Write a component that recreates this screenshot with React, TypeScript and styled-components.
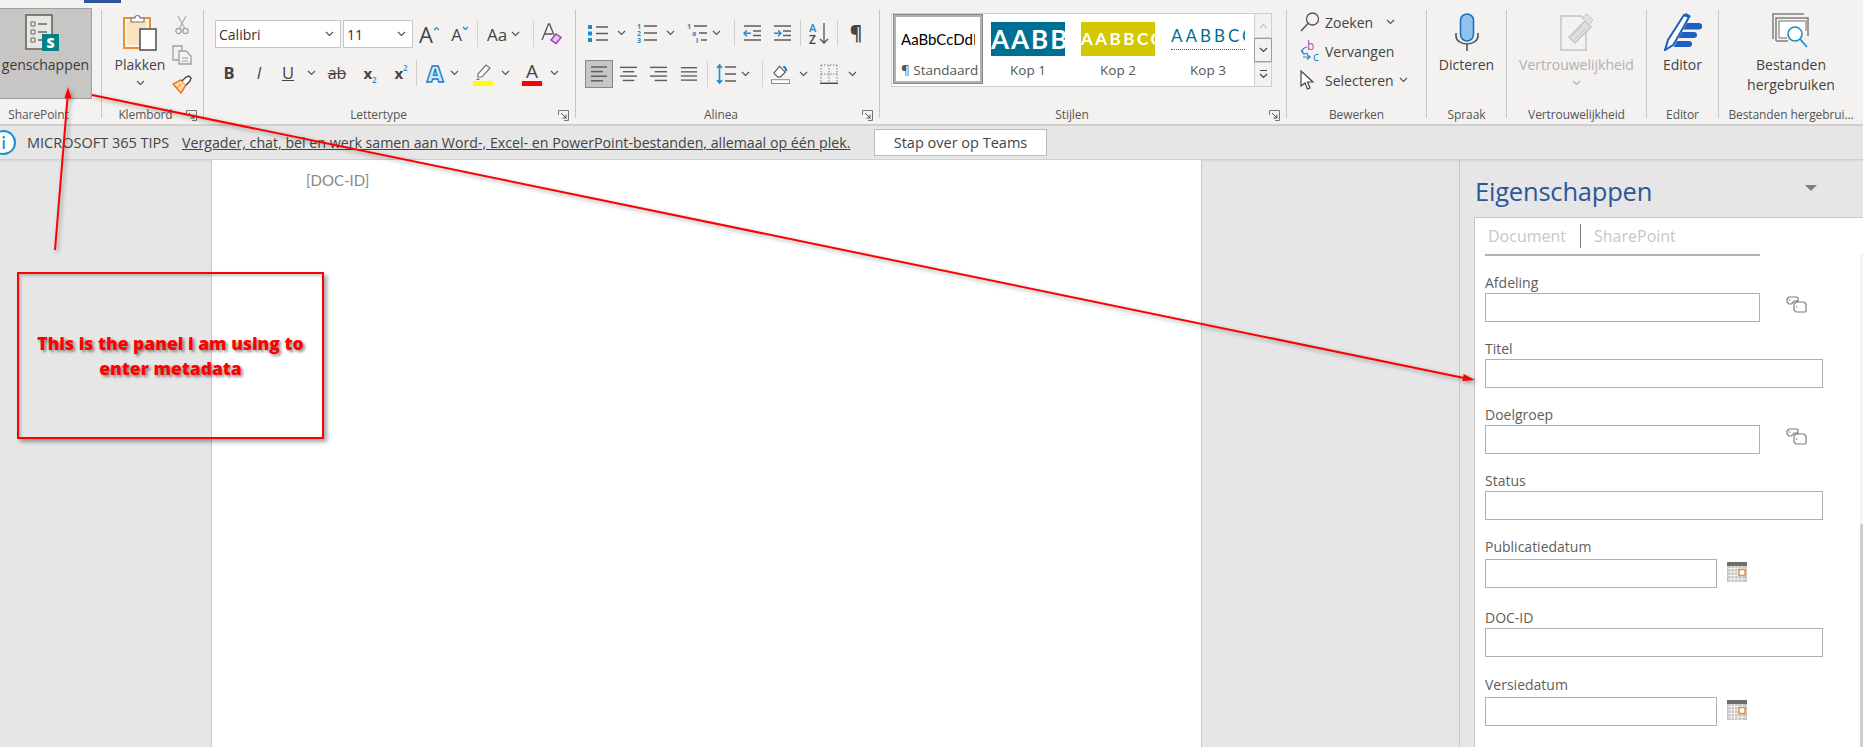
import { FC, ReactNode } from "react";
import styled, { createGlobalStyle } from "styled-components";

const GlobalStyle = createGlobalStyle`
  html, body {
    margin: 0;
    padding: 0;
    background: #e6e6e6;
  }
  * {
    box-sizing: border-box;
  }
`;

const UI_FONT = `"Open Sans", "Noto Sans", sans-serif`;
const DOC_FONT = `Lato, "Liberation Sans", sans-serif`;
const INK = "#605e5c";
const BLUE = "#1e8bcd";

const Screen = styled.div`
  position: relative;
  width: 1863px;
  height: 747px;
  overflow: hidden;
  background: #e6e6e6;
  font-family: ${UI_FONT};
  color: #444;
`;

/* ribbon */
const Ribbon = styled.div`
  height: 126px;
  background: #f3f2f1;
  border-bottom: 2px solid #d2d0ce;
`;
const TabStrip = styled.div`
  height: 3px;
  margin-bottom: 7px;
  & > div {
    margin-left: 84px;
    width: 37px;
    height: 3px;
    background: #2b579a;
  }
`;
const Groups = styled.div`
  display: flex;
`;
const Group = styled.section<{ $w: number; $pl?: number; $last?: boolean }>`
  width: ${(p) => p.$w}px;
  height: 108px;
  padding-left: ${(p) => p.$pl ?? 0}px;
  display: flex;
  flex-direction: column;
  flex-shrink: 0;
  border-right: ${(p) => (p.$last ? "none" : "1px solid #c8c6c4")};
`;
const GroupBody = styled.div`
  flex: 1;
  display: flex;
  flex-direction: column;
  min-height: 0;
`;
const BodyRow = styled.div`
  flex: 1;
  display: flex;
  min-height: 0;
`;
const Footer = styled.div<{ $pr?: number }>`
  height: 11px;
  display: flex;
  padding-right: ${(p) => p.$pr ?? 0}px;
  font-size: 12px;
  line-height: 16px;
  letter-spacing: -0.1px;
  color: #555;
  white-space: nowrap;
`;
const FooterLabel = styled.div`
  flex: 1;
  text-align: center;
  overflow: visible;
`;
const Launcher = styled.div`
  width: 22px;
  height: 16px;
  display: flex;
  align-items: center;
  justify-content: flex-end;
  padding-right: 6px;
`;

const ActiveButton = styled.div`
  width: 92px;
  height: 91px;
  margin-top: -2px;
  background: #c8c6c4;
  border: 1px solid #a19f9d;
  border-left: none;
  display: flex;
  flex-direction: column;
  align-items: center;
  padding-top: 5px;
  font-size: 14px;
  line-height: 20px;
  color: #3b3a39;
  overflow: hidden;
`;
const ActiveIcon = styled.div`
  height: 41px;
  margin-left: -5px;
`;
const BigButton = styled.div<{ $w?: number; $disabled?: boolean }>`
  width: ${(p) => (p.$w ? `${p.$w}px` : "100%")};
  padding-top: 3px;
  display: flex;
  flex-direction: column;
  align-items: center;
  font-size: 14px;
  line-height: 20px;
  text-align: center;
  white-space: nowrap;
  color: ${(p) => (p.$disabled ? "#b3b0ad" : "#444")};
`;
const BigIcon = styled.div`
  height: 42px;
  display: flex;
  align-items: flex-start;
  justify-content: center;
`;
const ChevronSlot = styled.div`
  height: 14px;
  display: flex;
  align-items: center;
  margin-top: 1px;
`;
const SmallColumn = styled.div`
  width: 24px;
  padding-top: 5px;
  display: flex;
  flex-direction: column;
  align-items: center;
  gap: 10px;
`;

const ToolRow = styled.div<{ $h: number; $mt: number; $pl?: number }>`
  height: ${(p) => p.$h}px;
  margin-top: ${(p) => p.$mt}px;
  padding-left: ${(p) => p.$pl ?? 0}px;
  display: flex;
  align-items: center;
`;
const Tool = styled.span<{ $w: number; $ml?: number; $active?: boolean; $h?: number }>`
  width: ${(p) => p.$w}px;
  height: ${(p) => (p.$h ? `${p.$h}px` : "auto")};
  margin-left: ${(p) => p.$ml ?? 0}px;
  flex-shrink: 0;
  display: inline-flex;
  align-items: center;
  justify-content: center;
  background: ${(p) => (p.$active ? "#c8c6c4" : "transparent")};
  border: ${(p) => (p.$active ? "1px solid #8a8886" : "none")};
`;
const ToolSep = styled.span<{ $ml: number }>`
  width: 1px;
  height: 26px;
  flex-shrink: 0;
  margin-left: ${(p) => p.$ml}px;
  background: #d2d0ce;
`;
const Combo = styled.div<{ $w: number; $ml?: number }>`
  width: ${(p) => p.$w}px;
  height: 28px;
  margin-left: ${(p) => p.$ml ?? 0}px;
  flex-shrink: 0;
  background: #fff;
  border: 1px solid #c8c6c4;
  display: flex;
  align-items: center;
  justify-content: space-between;
  padding: 0 6px 0 3px;
  font-size: 14px;
  color: #333;
`;
const Letter = styled.span<{
  $size: number;
  $weight?: number;
  $italic?: boolean;
  $under?: boolean;
  $strike?: boolean;
}>`
  font-size: ${(p) => p.$size}px;
  font-weight: ${(p) => p.$weight ?? 400};
  font-style: ${(p) => (p.$italic ? "italic" : "normal")};
  text-decoration: ${(p) => (p.$under ? "underline" : p.$strike ? "line-through" : "none")};
  line-height: 1;
  color: #444;
`;
const Caret = styled.svg`
  margin-bottom: 12px;
  flex-shrink: 0;
`;
const ScriptMark = styled.sub<{ $up?: boolean }>`
  font-size: 8px;
  font-weight: 600;
  color: ${BLUE};
  vertical-align: ${(p) => (p.$up ? "8px" : "-4px")};
  line-height: 0;
`;
const OutlineA = styled.span`
  font-size: 23px;
  font-weight: 800;
  line-height: 1;
  color: #d7ebfa;
  -webkit-text-stroke: 1.4px #1e7ccf;
`;
const ColorPick = styled.span<{ $bar: string }>`
  width: 20px;
  height: 26px;
  display: flex;
  flex-direction: column;
  align-items: center;
  justify-content: flex-end;
  font-size: 19px;
  line-height: 20px;
  &::after {
    content: "";
    width: 20px;
    height: 5px;
    background: ${(p) => p.$bar};
  }
`;

/* style gallery */
const Gallery = styled.div`
  margin: 3px 0 0 11px;
  width: 381px;
  height: 74px;
  background: #fff;
  border: 1px solid #d2d0ce;
  display: flex;
  padding-left: 1px;
`;
const StyleCard = styled.div<{ $active?: boolean }>`
  width: 90px;
  height: 70px;
  padding: ${(p) => (p.$active ? "5px 5px 0" : "8px 8px 0")};
  border: ${(p) => (p.$active ? "3px solid #b3b0ad" : "none")};
  outline: ${(p) => (p.$active ? "1px solid #8a8886" : "none")};
  outline-offset: -1px;
  text-align: center;
  font-size: 13.5px;
  line-height: 16px;
  color: #555;
  white-space: nowrap;
`;
const StylePreview = styled.div<{ $bg?: string; $color: string; $size: number; $weight?: number; $ls?: number; $dotted?: boolean }>`
  height: ${(p) => (p.$dotted ? 28 : 34)}px;
  overflow: hidden;
  background: ${(p) => p.$bg ?? "transparent"};
  color: ${(p) => p.$color};
  border-bottom: ${(p) => (p.$dotted ? "1px dotted #006f94" : "none")};
  font-family: ${DOC_FONT};
  font-size: ${(p) => p.$size}px;
  font-weight: ${(p) => p.$weight ?? 400};
  letter-spacing: ${(p) => p.$ls ?? 0}px;
  line-height: ${(p) => (p.$dotted ? 28 : 34)}px;
  text-align: left;
  white-space: nowrap;
`;
const StyleName = styled.div<{ $mt?: number }>`
  margin-top: ${(p) => p.$mt ?? 6}px;
`;
const GalleryScroll = styled.div`
  width: 18px;
  margin-left: auto;
  display: flex;
  flex-direction: column;
  margin-right: -1px;
  margin-top: -1px;
  margin-bottom: -1px;
`;
const ScrollButton = styled.div<{ $h: number; $strong?: boolean }>`
  height: ${(p) => p.$h}px;
  background: #f3f2f1;
  border: 1px solid ${(p) => (p.$strong ? "#a19f9d" : "#d2d0ce")};
  display: flex;
  align-items: center;
  justify-content: center;
`;

const FindRow = styled.div`
  height: 26px;
  margin-bottom: 3px;
  display: flex;
  align-items: center;
  font-size: 14px;
  &:first-child {
    margin-top: -1px;
  }
`;
const FindIcon = styled.span`
  width: 25px;
  display: inline-flex;
  justify-content: flex-start;
`;
const FindChevron = styled.span<{ $ml: number }>`
  margin-left: ${(p) => p.$ml}px;
  display: inline-flex;
`;

/* tips bar */
const TipsBar = styled.div`
  height: 34px;
  background: #e6e6e6;
  border-bottom: 1px solid #d2d0ce;
  box-shadow: 0 1px 2px rgba(0, 0, 0, 0.08);
  display: flex;
  align-items: center;
  font-size: 14.2px;
  color: #444;
`;
const InfoCircle = styled.span`
  width: 25px;
  height: 25px;
  margin-left: -9px;
  flex-shrink: 0;
  border: 2px solid #1e8bcd;
  border-radius: 50%;
  background: #fff;
  color: #1e8bcd;
  display: flex;
  align-items: center;
  justify-content: center;
  font-size: 17px;
  font-weight: 600;
  font-family: ${DOC_FONT};
`;
const TipsTitle = styled.span`
  margin-left: 11px;
  font-size: 14.5px;
  white-space: nowrap;
  width: 155px;
  flex-shrink: 0;
`;
const TipsLink = styled.span`
  text-decoration: underline;
  white-space: nowrap;
  width: 692px;
  flex-shrink: 0;
`;
const TipsButton = styled.div`
  width: 173px;
  height: 27px;
  background: #fff;
  border: 1px solid #bdbbb9;
  display: flex;
  align-items: center;
  justify-content: center;
  font-size: 14.5px;
`;

/* document area */
const Workspace = styled.div`
  display: flex;
  height: 587px;
`;
const Gutter = styled.div<{ $w: number }>`
  width: ${(p) => p.$w}px;
  flex-shrink: 0;
`;
const DocPage = styled.div`
  width: 991px;
  flex-shrink: 0;
  background: #fff;
  border-left: 1px solid #c8c6c4;
  border-right: 1px solid #c8c6c4;
  padding: 11px 0 0 94px;
  font-family: ${DOC_FONT};
  font-size: 15px;
  line-height: 19px;
  color: #8a8886;
`;
const Pane = styled.aside`
  flex: 1;
  min-width: 0;
  border-left: 1px solid #c8c6c4;
  padding-left: 14px;
  display: flex;
  flex-direction: column;
`;
const PaneHeader = styled.div`
  height: 57px;
  padding: 13px 46px 0 1px;
  display: flex;
  justify-content: space-between;
  font-size: 25.5px;
  line-height: 36px;
  letter-spacing: -0.2px;
  color: #2b579a;
  &::after {
    content: "";
    margin-top: 12px;
    width: 0;
    height: 0;
    border-left: 6px solid transparent;
    border-right: 6px solid transparent;
    border-top: 6px solid #7f7f7f;
  }
`;
const PaneCard = styled.div`
  flex: 1;
  min-height: 0;
  background: #fff;
  border-top: 1px solid #c8c6c4;
  border-left: 1px solid #c8c6c4;
  display: flex;
  flex-direction: column;
`;
const PaneTabs = styled.div`
  height: 36px;
  padding: 6px 0 0 13px;
  display: flex;
  align-items: flex-start;
  font-size: 16px;
  line-height: 24px;
  color: #c8c6c4;
  & > span:first-child {
    width: 93px;
    border-right: 1px solid #7f7f7f;
    margin-right: 13px;
  }
`;
const PaneBody = styled.div`
  flex: 1;
  min-height: 0;
  display: flex;
`;
const FormColumn = styled.div`
  flex: 1;
  padding-left: 10px;
`;
const CutField = styled.div`
  width: 275px;
  height: 2px;
  background: #b3b0ad;
`;
const Field = styled.div<{ $mt: number }>`
  margin-top: ${(p) => p.$mt}px;
`;
const FieldLabel = styled.div<{ $h: number }>`
  height: ${(p) => p.$h}px;
  font-size: 14px;
  line-height: 18px;
  color: #605e5c;
`;
const FieldLine = styled.div`
  display: flex;
  align-items: flex-start;
`;
const Input = styled.div<{ $w: number }>`
  width: ${(p) => p.$w}px;
  height: 29px;
  flex-shrink: 0;
  background: #fff;
  border: 1px solid #b3b0ad;
`;
const FieldIcon = styled.span<{ $ml: number }>`
  margin: 3px 0 0 ${(p) => p.$ml}px;
  display: inline-flex;
`;
const ScrollTrack = styled.div`
  width: 3px;
  background: #f3f3f3;
  display: flex;
  flex-direction: column;
`;
const ScrollThumb = styled.div`
  margin-top: 270px;
  flex: 1;
  background: #cdcdcd;
`;

/* annotation laid on top of the screenshot */
const ArrowLayer = styled.svg`
  position: absolute;
  left: 0;
  top: 0;
  pointer-events: none;
  filter: drop-shadow(2px 2px 2px rgba(0, 0, 0, 0.35));
`;
const CalloutBox = styled.div`
  position: absolute;
  left: 17px;
  top: 272px;
  width: 307px;
  height: 167px;
  border: 2px solid #ff0000;
  box-shadow: 3px 3px 4px rgba(0, 0, 0, 0.35), inset 2px 2px 3px rgba(0, 0, 0, 0.2);
  display: flex;
  align-items: center;
  justify-content: center;
  text-align: center;
  font-size: 17.5px;
  font-weight: 800;
  line-height: 25px;
  color: #ff0000;
  text-shadow: 2px 2px 3px rgba(0, 0, 0, 0.45);
`;

/* icons */
const Chevron: FC<{ color?: string }> = ({ color = "#555" }) => (
  <svg width="9" height="6" viewBox="0 0 9 6">
    <path d="M1 1l3.5 3.5L8 1" fill="none" stroke={color} strokeWidth="1.2" />
  </svg>
);
const LauncherIcon = () => (
  <svg width="11" height="11" viewBox="0 0 11 11">
    <path d="M.5 5V.5h10v10H6" fill="none" stroke="#777" />
    <path d="M3 3l5 5M8 4.5V8H4.5" fill="none" stroke="#555" />
  </svg>
);
const PropertiesIcon = () => (
  <svg width="36" height="38" viewBox="0 0 36 38">
    <rect x="1" y="1" width="26" height="34" fill="#e8e7e6" stroke="#69665f" strokeWidth="1.6" />
    <path d="M6 8h4v4H6zM6 16h4v4H6zM6 24h4v4H6z" fill="none" stroke="#69665f" />
    <path d="M13 10h9M13 18h9M13 26h4" stroke="#69665f" strokeWidth="1.4" />
    <rect x="17" y="20" width="17" height="17" fill="#038387" />
    <text x="25.5" y="33.5" textAnchor="middle" fontSize="14" fontWeight="800" fill="#fff" fontFamily="Open Sans">S</text>
  </svg>
);
const PasteIcon = () => (
  <svg width="34" height="38" viewBox="0 0 34 38">
    <rect x="1" y="5" width="26" height="30" fill="#fdf3e1" stroke="#e8913a" strokeWidth="2" />
    <rect x="4" y="8" width="20" height="24" fill="#fbe3bd" />
    <path d="M8 9V5h4a2.5 2.5 0 015 0h4v4z" fill="#fff" stroke="#777" strokeWidth="1.2" />
    <rect x="17" y="16" width="16" height="21" fill="#fff" stroke="#555" strokeWidth="1.6" />
  </svg>
);
const ScissorsIcon = () => (
  <svg width="14" height="20" viewBox="0 0 14 20">
    <path d="M3 1l6.5 12M11 1L4.5 13" stroke="#b3b0ad" strokeWidth="1.3" fill="none" />
    <circle cx="3.5" cy="16" r="2.6" fill="none" stroke="#a19f9d" strokeWidth="1.3" />
    <circle cx="10.5" cy="16" r="2.6" fill="none" stroke="#a19f9d" strokeWidth="1.3" />
  </svg>
);
const CopyIcon = () => (
  <svg width="20" height="20" viewBox="0 0 20 20">
    <path d="M1 1h9v14H1z" fill="#f3f2f1" stroke="#a19f9d" strokeWidth="1.3" />
    <path d="M7 6h7l5 5v8H7z" fill="#f3f2f1" stroke="#a19f9d" strokeWidth="1.3" />
    <path d="M10 13h6M10 16h6" stroke="#a19f9d" />
  </svg>
);
const PainterIcon = () => (
  <svg width="20" height="19" viewBox="0 0 20 19">
    <path d="M1 9l8 9 5-8-5-5z" fill="#fcdcae" stroke="#e8791a" strokeWidth="1.5" />
    <path d="M10 6l4-4 3-1 2 2-1 3-4 4" fill="#fff" stroke="#444" strokeWidth="1.4" />
    <path d="M5 13l4-4" stroke="#e8791a" />
  </svg>
);
const GrowA: FC<{ size: number; down?: boolean }> = ({ size, down }) => (
  <>
    <Letter $size={size}>A</Letter>
    <Caret width="7" height="5" viewBox="0 0 7 5">
      <path d={down ? "M1 1l2.5 2.5L6 1" : "M1 4l2.5-2.5L6 4"} fill="none" stroke={BLUE} strokeWidth="1.2" />
    </Caret>
  </>
);
const ClearFormatIcon = () => (
  <svg width="21" height="22" viewBox="0 0 21 22">
    <path d="M1 17L7.5 1h1L13 12M3.5 11h8" fill="none" stroke="#555" strokeWidth="1.3" />
    <path d="M10 17l5-6 5 3.5-5 6z" fill="#e9c6ee" stroke="#a03fb5" strokeWidth="1.4" />
  </svg>
);
const HighlightIcon = () => (
  <svg width="20" height="17" viewBox="0 0 20 17">
    <path d="M5 10l8-9 4 3-8 9H5z" fill="#fff" stroke="#777" strokeWidth="1.2" />
    <path d="M5 14l-2 2h4z" fill="#777" />
  </svg>
);
const Lines: FC<{ rows: [number, number][]; color?: string }> = ({ rows, color = "#605e5c" }) => (
  <svg width="20" height="20" viewBox="0 0 20 20">
    {rows.map(([x1, x2], i) => (
      <path key={i} d={`M${x1} ${3 + i * 4.6}H${x2}`} stroke={color} strokeWidth="1.5" />
    ))}
  </svg>
);
const BulletsIcon = () => (
  <svg width="21" height="18" viewBox="0 0 21 18">
    <path d="M0 1h4v4H0zM0 7.5h4v4H0zM0 14h4v4H0z" fill={BLUE} />
    <path d="M8 3h12M8 9.5h12M8 16h12" stroke={INK} strokeWidth="1.5" />
  </svg>
);
const NumberedIcon = () => (
  <svg width="20" height="20" viewBox="0 0 20 20">
    <text x="0" y="6" fontSize="7" fontWeight="700" fill={BLUE} fontFamily="Open Sans">1</text>
    <text x="0" y="13" fontSize="7" fontWeight="700" fill={BLUE} fontFamily="Open Sans">2</text>
    <text x="0" y="20" fontSize="7" fontWeight="700" fill={BLUE} fontFamily="Open Sans">3</text>
    <path d="M7 3h13M7 10h13M7 17h13" stroke={INK} strokeWidth="1.5" />
  </svg>
);
const MultilevelIcon = () => (
  <svg width="20" height="20" viewBox="0 0 20 20">
    <text x="0" y="6" fontSize="7" fontWeight="700" fill={BLUE} fontFamily="Open Sans">1</text>
    <text x="5" y="13" fontSize="7" fontWeight="700" fill={BLUE} fontFamily="Open Sans">a</text>
    <text x="9" y="20" fontSize="7" fontWeight="700" fill={BLUE} fontFamily="Open Sans">i</text>
    <path d="M7 3h13M12 10h8M14 17h6" stroke={INK} strokeWidth="1.5" />
  </svg>
);
const IndentIcon: FC<{ out?: boolean }> = ({ out }) => (
  <svg width="19" height="18" viewBox="0 0 19 18">
    <path d="M1 2h17M10 7h8M10 11.500h8M1 16h17" stroke={INK} strokeWidth="1.4" />
    <path d={out ? "M8 9.300H1M4 6.300L1 9.300l3 3" : "M1 9.300h7M5 6.300l3 3-3 3"} fill="none" stroke={BLUE} strokeWidth="1.4" />
  </svg>
);
const SortIcon = () => (
  <svg width="21" height="23" viewBox="0 0 21 23">
    <text x="0" y="10" fontSize="11" fontWeight="600" fill={BLUE} fontFamily="Open Sans">A</text>
    <text x="0" y="22" fontSize="12" fontWeight="600" fill="#444" fontFamily="Open Sans">Z</text>
    <path d="M15 1v20M11 17l4 4 4-4" fill="none" stroke="#555" strokeWidth="1.3" />
  </svg>
);
const LineSpacingIcon = () => (
  <svg width="20" height="20" viewBox="0 0 20 20">
    <path d="M3.500 1v18M1 4l2.500-3L6 4M1 16l2.500 3L6 16" fill="none" stroke={BLUE} strokeWidth="1.6" />
    <path d="M9 3h11M9 10h11M9 17h11" stroke={INK} strokeWidth="1.5" />
  </svg>
);
const ShadingIcon = () => (
  <svg width="20" height="21" viewBox="0 0 20 21">
    <path d="M3 9l6-7 6 6-5 5H7z" fill="#fff" stroke="#555" strokeWidth="1.2" />
    <path d="M13 2c2 1 3 3 3 5" fill="none" stroke="#1e6fc8" strokeWidth="2" />
    <rect x=".5" y="16" width="19" height="4" fill="#fff" stroke="#8a8886" />
  </svg>
);
const BordersIcon = () => (
  <svg width="18" height="20" viewBox="0 0 18 20">
    <path d="M1 1h16M1 1v18M17 1v18M9 1v18M1 10h16" fill="none" stroke="#7f7f7f" strokeDasharray="1.500 1.500" />
    <path d="M0 19.300h18" stroke="#444" strokeWidth="1.4" />
  </svg>
);
const SearchIcon = () => (
  <svg width="20" height="20" viewBox="0 0 20 20">
    <circle cx="12.500" cy="7" r="6" fill="none" stroke="#555" strokeWidth="1.3" />
    <path d="M8 11.500L1 19" stroke="#555" strokeWidth="1.5" />
  </svg>
);
const ReplaceIcon = () => (
  <svg width="20" height="22" viewBox="0 0 20 22">
    <text x="7" y="10" fontSize="12" fill="#b146c2" fontFamily="Open Sans">b</text>
    <text x="13" y="21" fontSize="12" fill={BLUE} fontFamily="Open Sans">c</text>
    <path d="M7 7C2 8 1 12 4 14M1 10.500L4 14l4-1M3 17h7M7 14.500l3 2.500-3 2.500" fill="none" stroke={BLUE} strokeWidth="1.2" />
  </svg>
);
const CursorIcon = () => (
  <svg width="15" height="20" viewBox="0 0 15 20">
    <path d="M1 1v15l4-3 2.500 6 2.500-1-2.500-6H13z" fill="#fff" stroke="#444" strokeWidth="1.2" />
  </svg>
);
const MicIcon = () => (
  <svg width="24" height="38" viewBox="0 0 24 38">
    <rect x="5.500" y="1" width="13" height="27" rx="6.500" fill="#8fc3ee" stroke="#1e6fc8" strokeWidth="1.6" />
    <path d="M1 20v3a11 8 0 0022 0v-3M12 31v7" fill="none" stroke="#555" strokeWidth="1.6" />
  </svg>
);
const SensitivityIcon = () => (
  <svg width="34" height="38" viewBox="0 0 34 38">
    <path d="M1 3h20l5 5v29H1z" fill="#f3f2f1" stroke="#d2d0ce" strokeWidth="2" />
    <path d="M9 24l16-16 6 6-16 16z" fill="#e1dfdd" stroke="#c8c6c4" strokeWidth="1.5" />
    <path d="M22 5l5-4 6 6-4 5z" fill="#e1dfdd" stroke="#c8c6c4" />
    <path d="M12 23l10-10M15 26l10-10" stroke="#c8c6c4" />
  </svg>
);
const EditorIcon = () => (
  <svg width="38" height="38" viewBox="0 0 38 38">
    <path d="M1 37l3-10L20 2l5 2-6 11-8 14-2 3z" fill="#fff" stroke="#1e5fc0" strokeWidth="2" />
    <path d="M20 2l2-2 5 3-2 2z" fill="#1e5fc0" />
    <path d="M23 10h12a3 3 0 010 6.500H19.500zM18 19h12a3 3 0 010 6H14.500zM13 28h12a3 3 0 010 6H9.500z" fill="#1e5fc0" />
  </svg>
);
const ReuseIcon = () => (
  <svg width="38" height="35" viewBox="0 0 38 35">
    <path d="M1 26V1h31" fill="none" stroke="#7f7f7f" strokeWidth="1.5" />
    <path d="M4 28V5h32v18M4 28h12" fill="none" stroke="#7f7f7f" strokeWidth="1.5" />
    <path d="M7 25V8h27v10M7 25h8" fill="#fff" stroke="#a19f9d" strokeWidth="1.500" />
    <circle cx="23" cy="21" r="7" fill="#fff" stroke="#1e8bcd" strokeWidth="1.600" />
    <path d="M28 26l7 8" stroke="#1e8bcd" strokeWidth="1.800" />
  </svg>
);
const TagsIcon = () => (
  <svg width="21" height="18" viewBox="0 0 21 18">
    <path d="M1 3l2-2h8l1 1v3H8L5.500 8H3L1 6zM8 8l2-2h8l2 2v7a1 1 0 01-1 1h-9l-2-2z" fill="#fff" stroke="#7f7f7f" strokeWidth="1.200" />
    <circle cx="3.500" cy="4" r=".8" fill="#7f7f7f" />
    <circle cx="10.500" cy="11" r=".8" fill="#7f7f7f" />
  </svg>
);
const CalendarIcon = () => (
  <svg width="20" height="20" viewBox="0 0 20 20">
    <rect width="20" height="20" fill="#c8c6c4" />
    <rect width="20" height="4" fill="#6e6e6e" />
    <path d="M1 6.500h18M1 10h18M1 13.500h18M1 17h18M4 4v16M7.500 4v16M11 4v16M15 4v16" stroke="#f2f2f2" />
    <rect x="12" y="7.500" width="6" height="6" fill="#fff" stroke="#e8913a" strokeWidth="1.500" />
  </svg>
);

const FormField: FC<{ label: string; mt: number; w: number; labelH?: number; icon?: ReactNode; iconMl?: number }> = ({
  label,
  mt,
  w,
  labelH = 19,
  icon,
  iconMl = 0,
}) => (
  <Field $mt={mt}>
    <FieldLabel $h={labelH}>{label}</FieldLabel>
    <FieldLine>
      <Input $w={w} />
      {icon && <FieldIcon $ml={iconMl}>{icon}</FieldIcon>}
    </FieldLine>
  </Field>
);

const GroupFooter: FC<{ label: string; launcher?: boolean; pr?: number }> = ({ label, launcher, pr }) => (
  <Footer $pr={pr}>
    <FooterLabel>{label}</FooterLabel>
    {launcher && (
      <Launcher>
        <LauncherIcon />
      </Launcher>
    )}
  </Footer>
);

export default function App() {
  return (
    <Screen>
      <GlobalStyle />
      <Ribbon>
        <TabStrip>
          <div />
        </TabStrip>
        <Groups>
          <Group $w={102}>
            <GroupBody>
              <ActiveButton>
                <ActiveIcon>
                  <PropertiesIcon />
                </ActiveIcon>
                <span>genschappen</span>
              </ActiveButton>
            </GroupBody>
            <GroupFooter label="SharePoint" pr={24} />
          </Group>

          <Group $w={102} $pl={8}>
            <BodyRow>
              <BigButton $w={60}>
                <BigIcon>
                  <PasteIcon />
                </BigIcon>
                Plakken
                <ChevronSlot>
                  <Chevron />
                </ChevronSlot>
              </BigButton>
              <SmallColumn>
                <ScissorsIcon />
                <CopyIcon />
                <PainterIcon />
              </SmallColumn>
            </BodyRow>
            <GroupFooter label="Klembord" launcher />
          </Group>

          <Group $w={372}>
            <GroupBody>
              <ToolRow $h={28} $mt={10} $pl={11}>
                <Combo $w={126}>
                  <span>Calibri</span>
                  <Chevron />
                </Combo>
                <Combo $w={70} $ml={2}>
                  <span>11</span>
                  <Chevron />
                </Combo>
                <Tool $w={19} $ml={7}>
                  <GrowA size={22} />
                </Tool>
                <Tool $w={18} $ml={12}>
                  <GrowA size={17} down />
                </Tool>
                <ToolSep $ml={8} />
                <Tool $w={20} $ml={9}>
                  <Letter $size={17}>Aa</Letter>
                </Tool>
                <Tool $w={10} $ml={3}>
                  <Chevron />
                </Tool>
                <ToolSep $ml={13} />
                <Tool $w={21} $ml={7}>
                  <ClearFormatIcon />
                </Tool>
              </ToolRow>
              <ToolRow $h={26} $mt={12} $pl={11}>
                <Tool $w={18} $ml={5}>
                  <Letter $size={16.5} $weight={700}>B</Letter>
                </Tool>
                <Tool $w={18} $ml={12}>
                  <Letter $size={16.5} $italic>I</Letter>
                </Tool>
                <Tool $w={18} $ml={11}>
                  <Letter $size={16.5} $under>U</Letter>
                </Tool>
                <Tool $w={10} $ml={9}>
                  <Chevron />
                </Tool>
                <Tool $w={20} $ml={11}>
                  <Letter $size={16} $strike>ab</Letter>
                </Tool>
                <Tool $w={16} $ml={15}>
                  <Letter $size={15} $weight={700}>x<ScriptMark>2</ScriptMark></Letter>
                </Tool>
                <Tool $w={16} $ml={15}>
                  <Letter $size={15} $weight={700}>x<ScriptMark $up>2</ScriptMark></Letter>
                </Tool>
                <ToolSep $ml={7} />
                <Tool $w={20} $ml={8}>
                  <OutlineA>A</OutlineA>
                </Tool>
                <Tool $w={10} $ml={4}>
                  <Chevron />
                </Tool>
                <Tool $w={20} $ml={14}>
                  <ColorPick $bar="#ffff00">
                    <HighlightIcon />
                  </ColorPick>
                </Tool>
                <Tool $w={10} $ml={7}>
                  <Chevron />
                </Tool>
                <Tool $w={20} $ml={12}>
                  <ColorPick $bar="#ff0000">A</ColorPick>
                </Tool>
                <Tool $w={10} $ml={7}>
                  <Chevron />
                </Tool>
              </ToolRow>
            </GroupBody>
            <GroupFooter label="Lettertype" launcher />
          </Group>

          <Group $w={304} $pl={9}>
            <GroupBody>
              <ToolRow $h={26} $mt={10}>
                <Tool $w={21} $ml={3}>
                  <BulletsIcon />
                </Tool>
                <Tool $w={10} $ml={7}>
                  <Chevron />
                </Tool>
                <Tool $w={20} $ml={11}>
                  <NumberedIcon />
                </Tool>
                <Tool $w={10} $ml={8}>
                  <Chevron />
                </Tool>
                <Tool $w={20} $ml={12}>
                  <MultilevelIcon />
                </Tool>
                <Tool $w={10} $ml={4}>
                  <Chevron />
                </Tool>
                <ToolSep $ml={13} />
                <Tool $w={19} $ml={8}>
                  <IndentIcon out />
                </Tool>
                <Tool $w={19} $ml={11}>
                  <IndentIcon />
                </Tool>
                <ToolSep $ml={8} />
                <Tool $w={21} $ml={8}>
                  <SortIcon />
                </Tool>
                <ToolSep $ml={7} />
                <Tool $w={14} $ml={11}>
                  <Letter $size={19} $weight={700}>¶</Letter>
                </Tool>
              </ToolRow>
              <ToolRow $h={28} $mt={14}>
                <Tool $w={28} $h={28} $active>
                  <Lines rows={[[2, 18], [2, 14], [2, 18], [2, 14]]} />
                </Tool>
                <Tool $w={19} $ml={6}>
                  <Lines rows={[[1, 19], [4, 16], [1, 19], [4, 16]]} />
                </Tool>
                <Tool $w={19} $ml={11}>
                  <Lines rows={[[1, 19], [6, 19], [1, 19], [6, 19]]} />
                </Tool>
                <Tool $w={18} $ml={12}>
                  <Lines rows={[[1, 19], [1, 19], [1, 19], [1, 19]]} />
                </Tool>
                <ToolSep $ml={9} />
                <Tool $w={20} $ml={8}>
                  <LineSpacingIcon />
                </Tool>
                <Tool $w={10} $ml={4}>
                  <Chevron />
                </Tool>
                <ToolSep $ml={12} />
                <Tool $w={19} $ml={8}>
                  <ShadingIcon />
                </Tool>
                <Tool $w={10} $ml={8}>
                  <Chevron />
                </Tool>
                <Tool $w={18} $ml={12}>
                  <BordersIcon />
                </Tool>
                <Tool $w={10} $ml={9}>
                  <Chevron />
                </Tool>
              </ToolRow>
            </GroupBody>
            <GroupFooter label="Alinea" launcher />
          </Group>

          <Group $w={407}>
            <GroupBody>
              <Gallery>
                <StyleCard $active>
                  <StylePreview $color="#000" $size={15}>AaBbCcDdI</StylePreview>
                  <StyleName>¶ Standaard</StyleName>
                </StyleCard>
                <StyleCard>
                  <StylePreview $bg="#006f94" $color="#fff" $size={26} $weight={700} $ls={2}>AABBCC</StylePreview>
                  <StyleName>Kop 1</StyleName>
                </StyleCard>
                <StyleCard>
                  <StylePreview $bg="#d4c800" $color="#fff" $size={17} $weight={700} $ls={2.5}>AABBCC</StylePreview>
                  <StyleName>Kop 2</StyleName>
                </StyleCard>
                <StyleCard>
                  <StylePreview $color="#006f94" $size={17} $ls={3} $dotted>AABBCC</StylePreview>
                  <StyleName $mt={12}>Kop 3</StyleName>
                </StyleCard>
                <GalleryScroll>
                  <ScrollButton $h={25}>
                    <svg width="9" height="6" viewBox="0 0 9 6">
                      <path d="M1 5l3.500-3.500L8 5" fill="none" stroke="#c8c6c4" strokeWidth="1.2" />
                    </svg>
                  </ScrollButton>
                  <ScrollButton $h={24} $strong>
                    <Chevron color="#444" />
                  </ScrollButton>
                  <ScrollButton $h={25}>
                    <svg width="9" height="9" viewBox="0 0 9 9">
                      <path d="M1 .5h7M1 4l3.500 3.500L8 4" fill="none" stroke="#444" strokeWidth="1.2" />
                    </svg>
                  </ScrollButton>
                </GalleryScroll>
              </Gallery>
            </GroupBody>
            <GroupFooter label="Stijlen" launcher />
          </Group>

          <Group $w={140} $pl={13}>
            <GroupBody>
              <FindRow>
                <FindIcon>
                  <SearchIcon />
                </FindIcon>
                Zoeken
                <FindChevron $ml={13}>
                  <Chevron />
                </FindChevron>
              </FindRow>
              <FindRow>
                <FindIcon>
                  <ReplaceIcon />
                </FindIcon>
                Vervangen
              </FindRow>
              <FindRow>
                <FindIcon>
                  <CursorIcon />
                </FindIcon>
                Selecteren
                <FindChevron $ml={5}>
                  <Chevron />
                </FindChevron>
              </FindRow>
            </GroupBody>
            <Footer $pr={13}>
              <FooterLabel>Bewerken</FooterLabel>
            </Footer>
          </Group>

          <Group $w={80}>
            <BodyRow>
              <BigButton>
                <BigIcon>
                  <MicIcon />
                </BigIcon>
                Dicteren
              </BigButton>
            </BodyRow>
            <GroupFooter label="Spraak" />
          </Group>

          <Group $w={140}>
            <BodyRow>
              <BigButton $disabled>
                <BigIcon>
                  <SensitivityIcon />
                </BigIcon>
                Vertrouwelijkheid
                <ChevronSlot>
                  <Chevron color="#b3b0ad" />
                </ChevronSlot>
              </BigButton>
            </BodyRow>
            <GroupFooter label="Vertrouwelijkheid" />
          </Group>

          <Group $w={72}>
            <BodyRow>
              <BigButton>
                <BigIcon>
                  <EditorIcon />
                </BigIcon>
                Editor
              </BigButton>
            </BodyRow>
            <GroupFooter label="Editor" />
          </Group>

          <Group $w={144} $last>
            <BodyRow>
              <BigButton>
                <BigIcon>
                  <ReuseIcon />
                </BigIcon>
                Bestanden
                <br />
                hergebruiken
              </BigButton>
            </BodyRow>
            <GroupFooter label="Bestanden hergebrui..." />
          </Group>
        </Groups>
      </Ribbon>

      <TipsBar>
        <InfoCircle>i</InfoCircle>
        <TipsTitle>MICROSOFT 365 TIPS</TipsTitle>
        <TipsLink>Vergader, chat, bel en werk samen aan Word-, Excel- en PowerPoint-bestanden, allemaal op één plek.</TipsLink>
        <TipsButton>Stap over op Teams</TipsButton>
      </TipsBar>

      <Workspace>
        <Gutter $w={211} />
        <DocPage>[DOC-ID]</DocPage>
        <Gutter $w={257} />
        <Pane>
          <PaneHeader>Eigenschappen</PaneHeader>
          <PaneCard>
            <PaneTabs>
              <span>Document</span>
              <span>SharePoint</span>
            </PaneTabs>
            <PaneBody>
              <FormColumn>
                <CutField />
                <FormField label="Afdeling" mt={18} w={275} icon={<TagsIcon />} iconMl={26} />
                <FormField label="Titel" mt={18} w={338} />
                <FormField label="Doelgroep" mt={18} w={275} icon={<TagsIcon />} iconMl={26} />
                <FormField label="Status" mt={18} w={338} />
                <FormField label="Publicatiedatum" mt={18} labelH={21} w={232} icon={<CalendarIcon />} iconMl={10} />
                <FormField label="DOC-ID" mt={21} w={338} />
                <FormField label="Versiedatum" mt={19} labelH={21} w={232} icon={<CalendarIcon />} iconMl={10} />
              </FormColumn>
              <ScrollTrack>
                <ScrollThumb />
              </ScrollTrack>
            </PaneBody>
          </PaneCard>
        </Pane>
      </Workspace>

      <CalloutBox>
        This is the panel i am using to
        <br />
        enter metadata
      </CalloutBox>
      <ArrowLayer width="1863" height="747" viewBox="0 0 1863 747">
        <path d="M55 250L67.500 98" stroke="#ff0000" strokeWidth="2" fill="none" />
        <path d="M68 87l-3.500 11 7 .5z" fill="#ff0000" />
        <path d="M92 95L1464 378" stroke="#ff0000" strokeWidth="2" fill="none" />
        <path d="M1475 380l-12.700 .9 1.400-6.800z" fill="#ff0000" />
      </ArrowLayer>
    </Screen>
  );
}
